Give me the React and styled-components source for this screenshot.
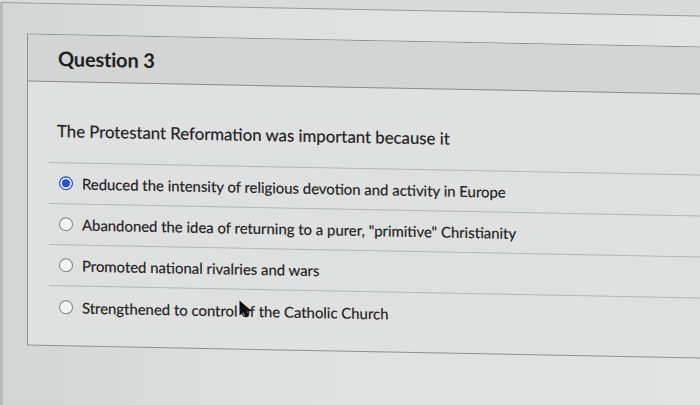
import React from "react";
import styled, { createGlobalStyle } from "styled-components";

const Global = createGlobalStyle`
  html, body { margin: 0; padding: 0; }
  body {
    width: 700px; height: 405px; overflow: hidden;
    background: #d9dbda;
    font-family: Lato, "Noto Sans", sans-serif;
    color: #222425;
  }
`;

const Page = styled.div`
  width: 720px;
  height: 420px;
  box-sizing: border-box;
  border-top: 1px solid #9a9c9b;
  border-left: 3px solid #b9bbba;
  margin-top: 2px;
  padding: 30px 0 0 24px;
  transform: skewY(1.1deg);
  transform-origin: 0 0;
  background: linear-gradient(90deg, #d4d6d5 0%, #dfe1e0 40%, #e2e4e3 100%);
`;

const Card = styled.section`
  width: 700px;
  border: 1px solid #8f9190;
  border-right: none;
  background: #dfe1e0;
`;

const Header = styled.header`
  height: 47px;
  box-sizing: border-box;
  display: flex;
  align-items: center;
  padding-left: 30px;
  background: #d3d5d4;
  border-bottom: 1px solid #8a8c8b;
`;

const Title = styled.h2`
  margin: 0;
  font-size: 20px;
  font-weight: 700;
  color: #1e2021;
  letter-spacing: -0.2px;
`;

const Body = styled.div`
  padding: 38px 0 18px 29px;
`;

const Prompt = styled.p`
  margin: 0 0 21px 0;
  font-size: 16.8px;
  color: #1f2122;
  -webkit-text-stroke: 0.2px #1f2122;
`;

const Options = styled.ul`
  list-style: none;
  margin: 0;
  padding: 0;
  margin-left: -8px;
  border-top: 1px solid #b5b7b6;
`;

const Option = styled.li`
  position: relative;
  display: flex;
  align-items: center;
  gap: 9px;
  height: 41px;
  box-sizing: border-box;
  padding-left: 10px;
  border-bottom: ${(p) => (p.$last ? "none" : "1px solid #b5b7b6")};
  font-size: 14.9px;
  color: #1f2122;
  -webkit-text-stroke: 0.2px #1f2122;
`;

const Radio = styled.span`
  width: 14px;
  height: 14px;
  border-radius: 50%;
  box-sizing: border-box;
  flex: none;
  border: ${(p) => (p.$checked ? "1.5px solid #2c4fc4" : "1.5px solid #7d7f80")};
  background: ${(p) => (p.$checked ? "#2350d6" : "#f2f3f3")};
  box-shadow: ${(p) => (p.$checked ? "inset 0 0 0 2px #e6eaf6" : "none")};
`;

const CursorWrap = styled.span`
  position: relative;
  display: inline-block;
`;

const Cursor = styled.svg`
  position: absolute;
  left: -2px;
  top: -1px;
  width: 14px;
  height: 18px;
`;

const options = [
  "Reduced the intensity of religious devotion and activity in Europe",
  'Abandoned the idea of returning to a purer, "primitive" Christianity',
  "Promoted national rivalries and wars",
];

export default function App() {
  return (
    <>
      <Global />
      <Page>
        <Card>
          <Header>
            <Title>Question 3</Title>
          </Header>
          <Body>
            <Prompt>The Protestant Reformation was important because it</Prompt>
            <Options>
              {options.map((o, i) => (
                <Option key={i}>
                  <Radio $checked={i === 0} />
                  <span>{o}</span>
                </Option>
              ))}
              <Option $last>
                <Radio />
                <span>
                  Strengthened to control{" "}
                  <CursorWrap>
                    of
                    <Cursor viewBox="0 0 14 18">
                      <path d="M1 1 L1 14 L4.5 10.5 L7 16 L9.2 15 L6.8 9.8 L11.5 9.8 Z" fill="#111" stroke="#111" strokeWidth="1" />
                    </Cursor>
                  </CursorWrap>{" "}
                  the Catholic Church
                </span>
              </Option>
            </Options>
          </Body>
        </Card>
      </Page>
    </>
  );
}
